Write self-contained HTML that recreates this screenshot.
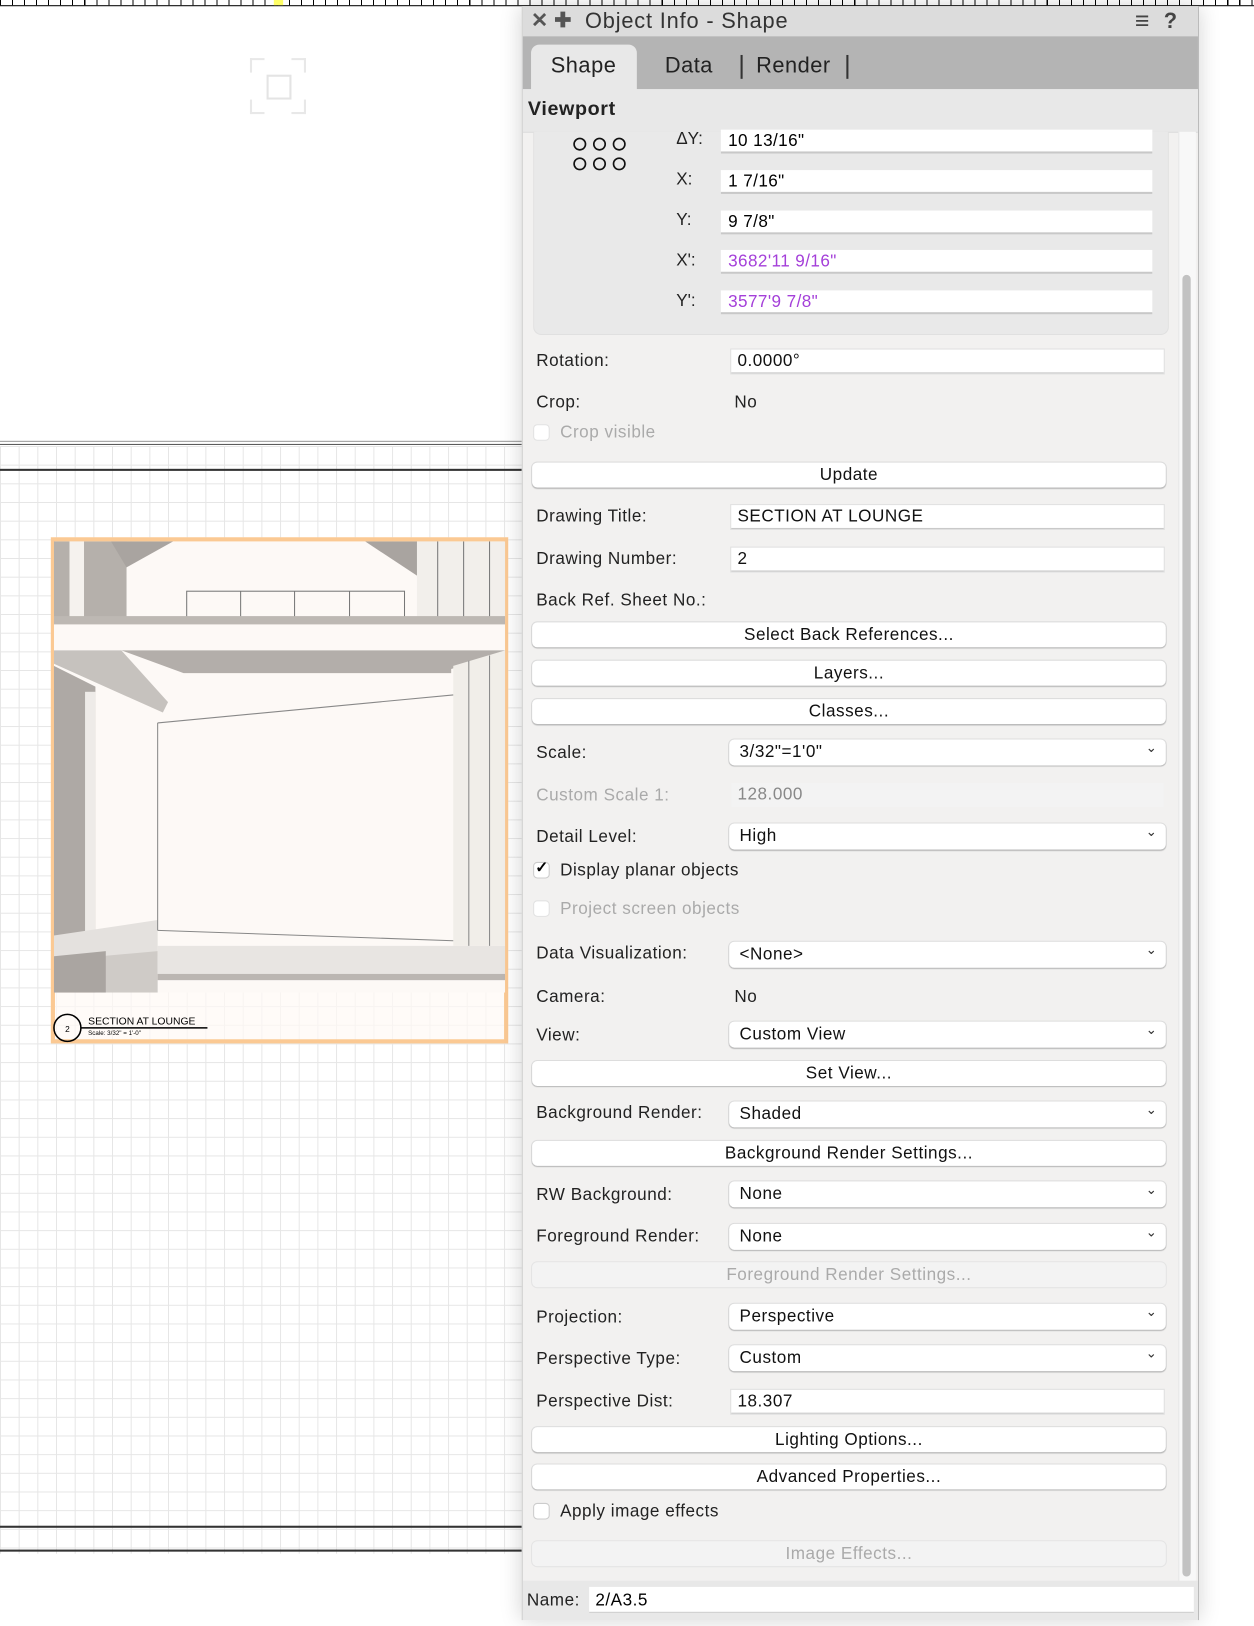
<!DOCTYPE html>
<html><head><meta charset="utf-8"><style>
html,body{margin:0;padding:0;width:1254px;height:1626px;overflow:hidden;background:#fff;font-family:"Liberation Sans",sans-serif;}
#w{position:absolute;left:0;top:0;width:1209px;height:1568px;transform:scale(1.0372);transform-origin:0 0;}
.a{position:absolute;}
.grid{background-color:#fff;background-image:linear-gradient(#e6e6e6 1px,transparent 1px),linear-gradient(90deg,#e6e6e6 1px,transparent 1px);background-size:18px 18px;}
.lbl{position:absolute;left:517px;font-size:16.5px;color:#222;line-height:20px;letter-spacing:0.5px;}
.dis{color:#aaa;}
.fld{position:absolute;left:705px;width:417px;height:23px;background:#fff;border-bottom:1px solid #c8c8c8;box-shadow:0 0 0 1px #e0e0e0;font-size:16.5px;line-height:23px;padding-left:6px;box-sizing:border-box;color:#111;letter-spacing:0.5px;}
.dd{position:absolute;left:703px;width:421px;height:25px;background:#fff;border-radius:5px;box-shadow:0 1px 1px #bbb,0 0 0 1px #ddd;font-size:16.5px;line-height:25px;padding-left:10px;box-sizing:border-box;color:#111;letter-spacing:0.5px;}
.dd:after{content:"⌄";position:absolute;right:8px;top:-5px;font-size:13px;color:#333;}
.btn{position:absolute;left:513px;width:611px;height:24px;background:#fff;border-radius:5px;box-shadow:0 1px 1px #bbb,0 0 0 1px #ddd;font-size:16.5px;line-height:24px;text-align:center;color:#111;letter-spacing:0.5px;}
.btn.d{background:#f3f3f3;color:#aaa;box-shadow:0 0 0 1px #e4e4e4;}
.cb{position:absolute;left:514px;width:16px;height:16px;border:1px solid #ccc;border-radius:4px;background:#fff;box-sizing:border-box;}
.sf{position:absolute;left:695px;width:416px;height:23px;background:#fff;border-bottom:2px solid #c8c8c8;font-size:16.5px;line-height:23px;padding-left:7px;box-sizing:border-box;letter-spacing:0.4px;}
.sl{position:absolute;left:652px;font-size:16.5px;color:#222;}
</style></head><body><div id="w">
<div class="a" style="left:0;top:0;width:1209px;height:5px;border-bottom:1px solid #000;background:repeating-linear-gradient(90deg,#000 0 1px,transparent 1px 11.6px);"></div>
<div class="a" style="left:264px;top:0;width:9px;height:5px;background:#ff6;"></div>
<div class="a" style="left:241px;top:56px;width:54px;height:54px;">
<div class="a" style="left:0;top:0;width:12px;height:12px;border-left:2px solid #e8e8e8;border-top:2px solid #e8e8e8"></div>
<div class="a" style="right:0;top:0;width:12px;height:12px;border-right:2px solid #e8e8e8;border-top:2px solid #e8e8e8"></div>
<div class="a" style="left:0;bottom:0;width:12px;height:12px;border-left:2px solid #e8e8e8;border-bottom:2px solid #e8e8e8"></div>
<div class="a" style="right:0;bottom:0;width:12px;height:12px;border-right:2px solid #e8e8e8;border-bottom:2px solid #e8e8e8"></div>
<div class="a" style="left:16px;top:16px;width:20px;height:20px;border:2px solid #e4e4e4"></div>
</div>
<div class="a" style="left:0;top:425px;width:505px;height:1px;background:#999"></div>
<div class="a grid" style="left:0;top:430px;width:505px;height:1068px;"></div>
<div class="a" style="left:0;top:428px;width:505px;height:1px;background:#555"></div>
<div class="a" style="left:0;top:452px;width:505px;height:2px;background:#333"></div>
<div class="a" style="left:0;top:1471px;width:505px;height:2px;background:#333"></div>
<div class="a" style="left:0;top:1494px;width:505px;height:2px;background:#333"></div>
<div class="a" style="left:49px;top:518px;width:441px;height:488px;background:rgba(255,250,245,.7);border:4px solid #fbc993;box-sizing:border-box;"></div>
<svg class="a" style="left:52px;top:522px" width="435" height="435" viewBox="0 0 435 435">
<rect width="435" height="435" fill="#fdf9f6"/>
<polygon points="0,0 70,0 70,75 0,75" fill="#b5b0ab"/>
<rect x="15" y="0" width="14" height="75" fill="#f5f2ee"/>
<polygon points="55,0 115,0 70,25" fill="#a9a4a0"/>
<polygon points="300,0 370,0 350,33" fill="#a9a4a0"/>
<rect x="350" y="0" width="85" height="75" fill="#f2efeb"/>
<g stroke="#777" stroke-width="1" fill="none"><line x1="370" y1="0" x2="370" y2="75"/><line x1="395" y1="0" x2="395" y2="75"/><line x1="420" y1="0" x2="420" y2="75"/><rect x="128" y="48" width="210" height="28"/><line x1="180" y1="48" x2="180" y2="75"/><line x1="232" y1="48" x2="232" y2="75"/><line x1="285" y1="48" x2="285" y2="75"/></g>
<rect x="0" y="72" width="435" height="8" fill="#bdb8b3"/>
<polygon points="65,105 435,105 435,107 383,123 383,127 125,127 65,105" fill="#b3aeaa"/>
<polygon points="0,105 65,105 110,155 105,165 0,118" fill="#c6c2be"/>
<polygon points="0,120 40,140 40,435 0,435" fill="#aea9a5"/>
<rect x="30" y="145" width="10" height="250" fill="#eeebe8"/>
<polygon points="0,380 100,365 100,400 55,415 0,420" fill="#e4e1de"/>
<polygon points="45,400 100,395 100,435 45,435" fill="#cfcbc7"/>
<polygon points="0,400 50,395 50,435 0,435" fill="#aaa5a1"/>
<polygon points="100,390 435,390 435,418 100,418" fill="#e8e5e2"/>
<rect x="100" y="417" width="335" height="6" fill="#bbb6b2"/>
<polygon points="385,120 435,105 435,390 385,390" fill="#f1eee9"/>
<g stroke="#888" fill="none"><line x1="400" y1="115" x2="400" y2="390"/><line x1="420" y1="110" x2="420" y2="390"/><line x1="100" y1="175" x2="385" y2="148"/><line x1="100" y1="175" x2="100" y2="375"/><line x1="100" y1="375" x2="385" y2="385"/></g>
</svg>
<svg class="a" style="left:50px;top:975px" width="160" height="32"><circle cx="15" cy="16" r="13" fill="none" stroke="#000" stroke-width="1.5"/><text x="15" y="20" font-size="8" text-anchor="middle" font-family="Liberation Sans">2</text><text x="35" y="13" font-size="10" font-family="Liberation Sans">SECTION AT LOUNGE</text><line x1="28" y1="16" x2="150" y2="16" stroke="#000" stroke-width="1.5"/><text x="35" y="23" font-size="6" font-family="Liberation Sans">Scale: 3/32" = 1'-0"</text></svg>
<div class="a" style="left:503px;top:6px;width:653px;height:1556px;box-shadow:0 0 20px rgba(0,0,0,.18);"></div>
<div class="a" style="left:503px;top:6px;width:653px;height:1556px;background:#f2f1f0;overflow:hidden;border-left:1px solid #ccc;border-right:1px solid #bbb;box-sizing:border-box;">
 <div class="a" style="left:0;top:0;width:653px;height:29px;background:#dcdcdc;"></div>
 <div class="a" style="left:8px;top:0;font-size:20px;line-height:29px;color:#555;font-weight:bold;">✕ ✚</div>
 <div class="a" style="left:60px;top:0;font-size:21px;line-height:29px;color:#333;letter-spacing:0.8px;">Object Info - Shape</div>
 <div class="a" style="left:590px;top:0;font-size:24px;line-height:29px;color:#444;font-weight:bold;">≡</div>
 <div class="a" style="left:618px;top:0;font-size:21px;line-height:29px;color:#444;font-weight:bold;">?</div>
 <div class="a" style="left:0;top:29px;width:653px;height:51px;background:#b4b4b4;"></div>
 <div class="a" style="left:8px;top:37px;width:102px;height:44px;background:#e8e8e8;border-radius:8px 8px 0 0;"></div>
 <div class="a" style="left:27px;top:46px;font-size:21px;color:#222;letter-spacing:0.5px;">Shape</div>
 <div class="a" style="left:137px;top:46px;font-size:21px;color:#222;letter-spacing:0.5px;">Data</div>
 <div class="a" style="left:210px;top:47px;width:2px;height:23px;background:#333;"></div>
 <div class="a" style="left:225px;top:46px;font-size:21px;color:#222;letter-spacing:0.5px;">Render</div>
 <div class="a" style="left:312px;top:47px;width:2px;height:23px;background:#333;"></div>
 <div class="a" style="left:0;top:80px;width:653px;height:41px;background:#e8e8e8;border-bottom:1px solid #ddd;"></div>
 <div class="a" style="left:5px;top:89px;font-size:19px;font-weight:bold;color:#222;letter-spacing:0.6px;">Viewport</div>
 <div class="a" style="left:10px;top:121px;width:611px;height:195px;background:#e9e9e9;border-radius:0 0 8px 8px;border:1px solid #e0e0e0;border-top:none;"></div>
 <div class="a" style="left:632px;top:121px;width:16px;height:1398px;background:#f8f8f8;border-left:1px solid #e6e6e6;"></div>
 <div class="a" style="left:636px;top:259px;width:8px;height:1255px;background:#c2c2c2;border-radius:4px;"></div>
 <div class="a" style="left:0;top:1518px;width:653px;height:38px;background:#e8e8e8;"></div>
 <div class="a" style="left:4px;top:1528px;font-size:16.5px;color:#222;letter-spacing:0.5px;">Name:</div>
 <div class="a" style="left:64px;top:1524px;width:583px;height:25px;background:#fff;border-bottom:1px solid #ccc;font-size:16.5px;line-height:27px;padding-left:6px;box-sizing:border-box;letter-spacing:0.5px;">2/A3.5</div>
</div>
<svg class="a" style="left:551px;top:131px" width="56" height="36"><g fill="none" stroke="#111" stroke-width="1.6"><circle cx="8" cy="8" r="5.5"/><circle cx="27" cy="8" r="5.5"/><circle cx="46" cy="8" r="5.5"/><circle cx="8" cy="27" r="5.5"/><circle cx="27" cy="27" r="5.5"/><circle cx="46" cy="27" r="5.5"/></g></svg>
<div class="sl" style="top:125px">ΔY:</div><div class="sf" style="top:125px">10 13/16"</div>
<div class="sl" style="top:164px">X:</div><div class="sf" style="top:164px">1 7/16"</div>
<div class="sl" style="top:203px">Y:</div><div class="sf" style="top:203px">9 7/8"</div>
<div class="sl" style="top:242px">X':</div><div class="sf" style="top:241px;color:#a43fd9">3682'11 9/16"</div>
<div class="sl" style="top:281px">Y':</div><div class="sf" style="top:280px;color:#a43fd9">3577'9 7/8"</div>

<div class="lbl" style="top:338px">Rotation:</div><div class="fld" style="top:337px">0.0000°</div>
<div class="lbl" style="top:378px">Crop:</div><div class="lbl" style="top:378px;left:708px">No</div>
<div class="cb" style="top:409px;border-color:#e2e2e2"></div><div class="lbl dis" style="top:407px;left:540px">Crop visible</div>
<div class="btn" style="top:446px">Update</div>
<div class="lbl" style="top:488px">Drawing Title:</div><div class="fld" style="top:487px">SECTION AT LOUNGE</div>
<div class="lbl" style="top:529px">Drawing Number:</div><div class="fld" style="top:528px">2</div>
<div class="lbl" style="top:569px">Back Ref. Sheet No.:</div>
<div class="btn" style="top:600px">Select Back References...</div>
<div class="btn" style="top:637px">Layers...</div>
<div class="btn" style="top:674px">Classes...</div>
<div class="lbl" style="top:716px">Scale:</div><div class="dd" style="top:713px">3/32"=1'0"</div>
<div class="lbl dis" style="top:757px">Custom Scale 1:</div><div class="fld" style="top:755px;background:#f3f3f3;color:#888;box-shadow:none;border:none">128.000</div>
<div class="lbl" style="top:797px">Detail Level:</div><div class="dd" style="top:794px">High</div>
<div class="cb" style="top:831px"></div><div class="a" style="left:516px;top:827px;font-size:15px;font-weight:bold">✓</div><div class="lbl" style="top:829px;left:540px">Display planar objects</div>
<div class="cb" style="top:868px;border-color:#e2e2e2"></div><div class="lbl dis" style="top:866px;left:540px">Project screen objects</div>
<div class="lbl" style="top:909px">Data Visualization:</div><div class="dd" style="top:908px">&lt;None&gt;</div>
<div class="lbl" style="top:951px">Camera:</div><div class="lbl" style="top:951px;left:708px">No</div>
<div class="lbl" style="top:988px">View:</div><div class="dd" style="top:985px">Custom View</div>
<div class="btn" style="top:1023px">Set View...</div>
<div class="lbl" style="top:1063px">Background Render:</div><div class="dd" style="top:1062px">Shaded</div>
<div class="btn" style="top:1100px">Background Render Settings...</div>
<div class="lbl" style="top:1142px">RW Background:</div><div class="dd" style="top:1139px">None</div>
<div class="lbl" style="top:1182px">Foreground Render:</div><div class="dd" style="top:1180px">None</div>
<div class="btn d" style="top:1217px">Foreground Render Settings...</div>
<div class="lbl" style="top:1260px">Projection:</div><div class="dd" style="top:1257px">Perspective</div>
<div class="lbl" style="top:1300px">Perspective Type:</div><div class="dd" style="top:1297px">Custom</div>
<div class="lbl" style="top:1341px">Perspective Dist:</div><div class="fld" style="top:1340px">18.307</div>
<div class="btn" style="top:1376px">Lighting Options...</div>
<div class="btn" style="top:1412px">Advanced Properties...</div>
<div class="cb" style="top:1449px"></div><div class="lbl" style="top:1447px;left:540px">Apply image effects</div>
<div class="btn d" style="top:1486px">Image Effects...</div>
</div></body></html>
